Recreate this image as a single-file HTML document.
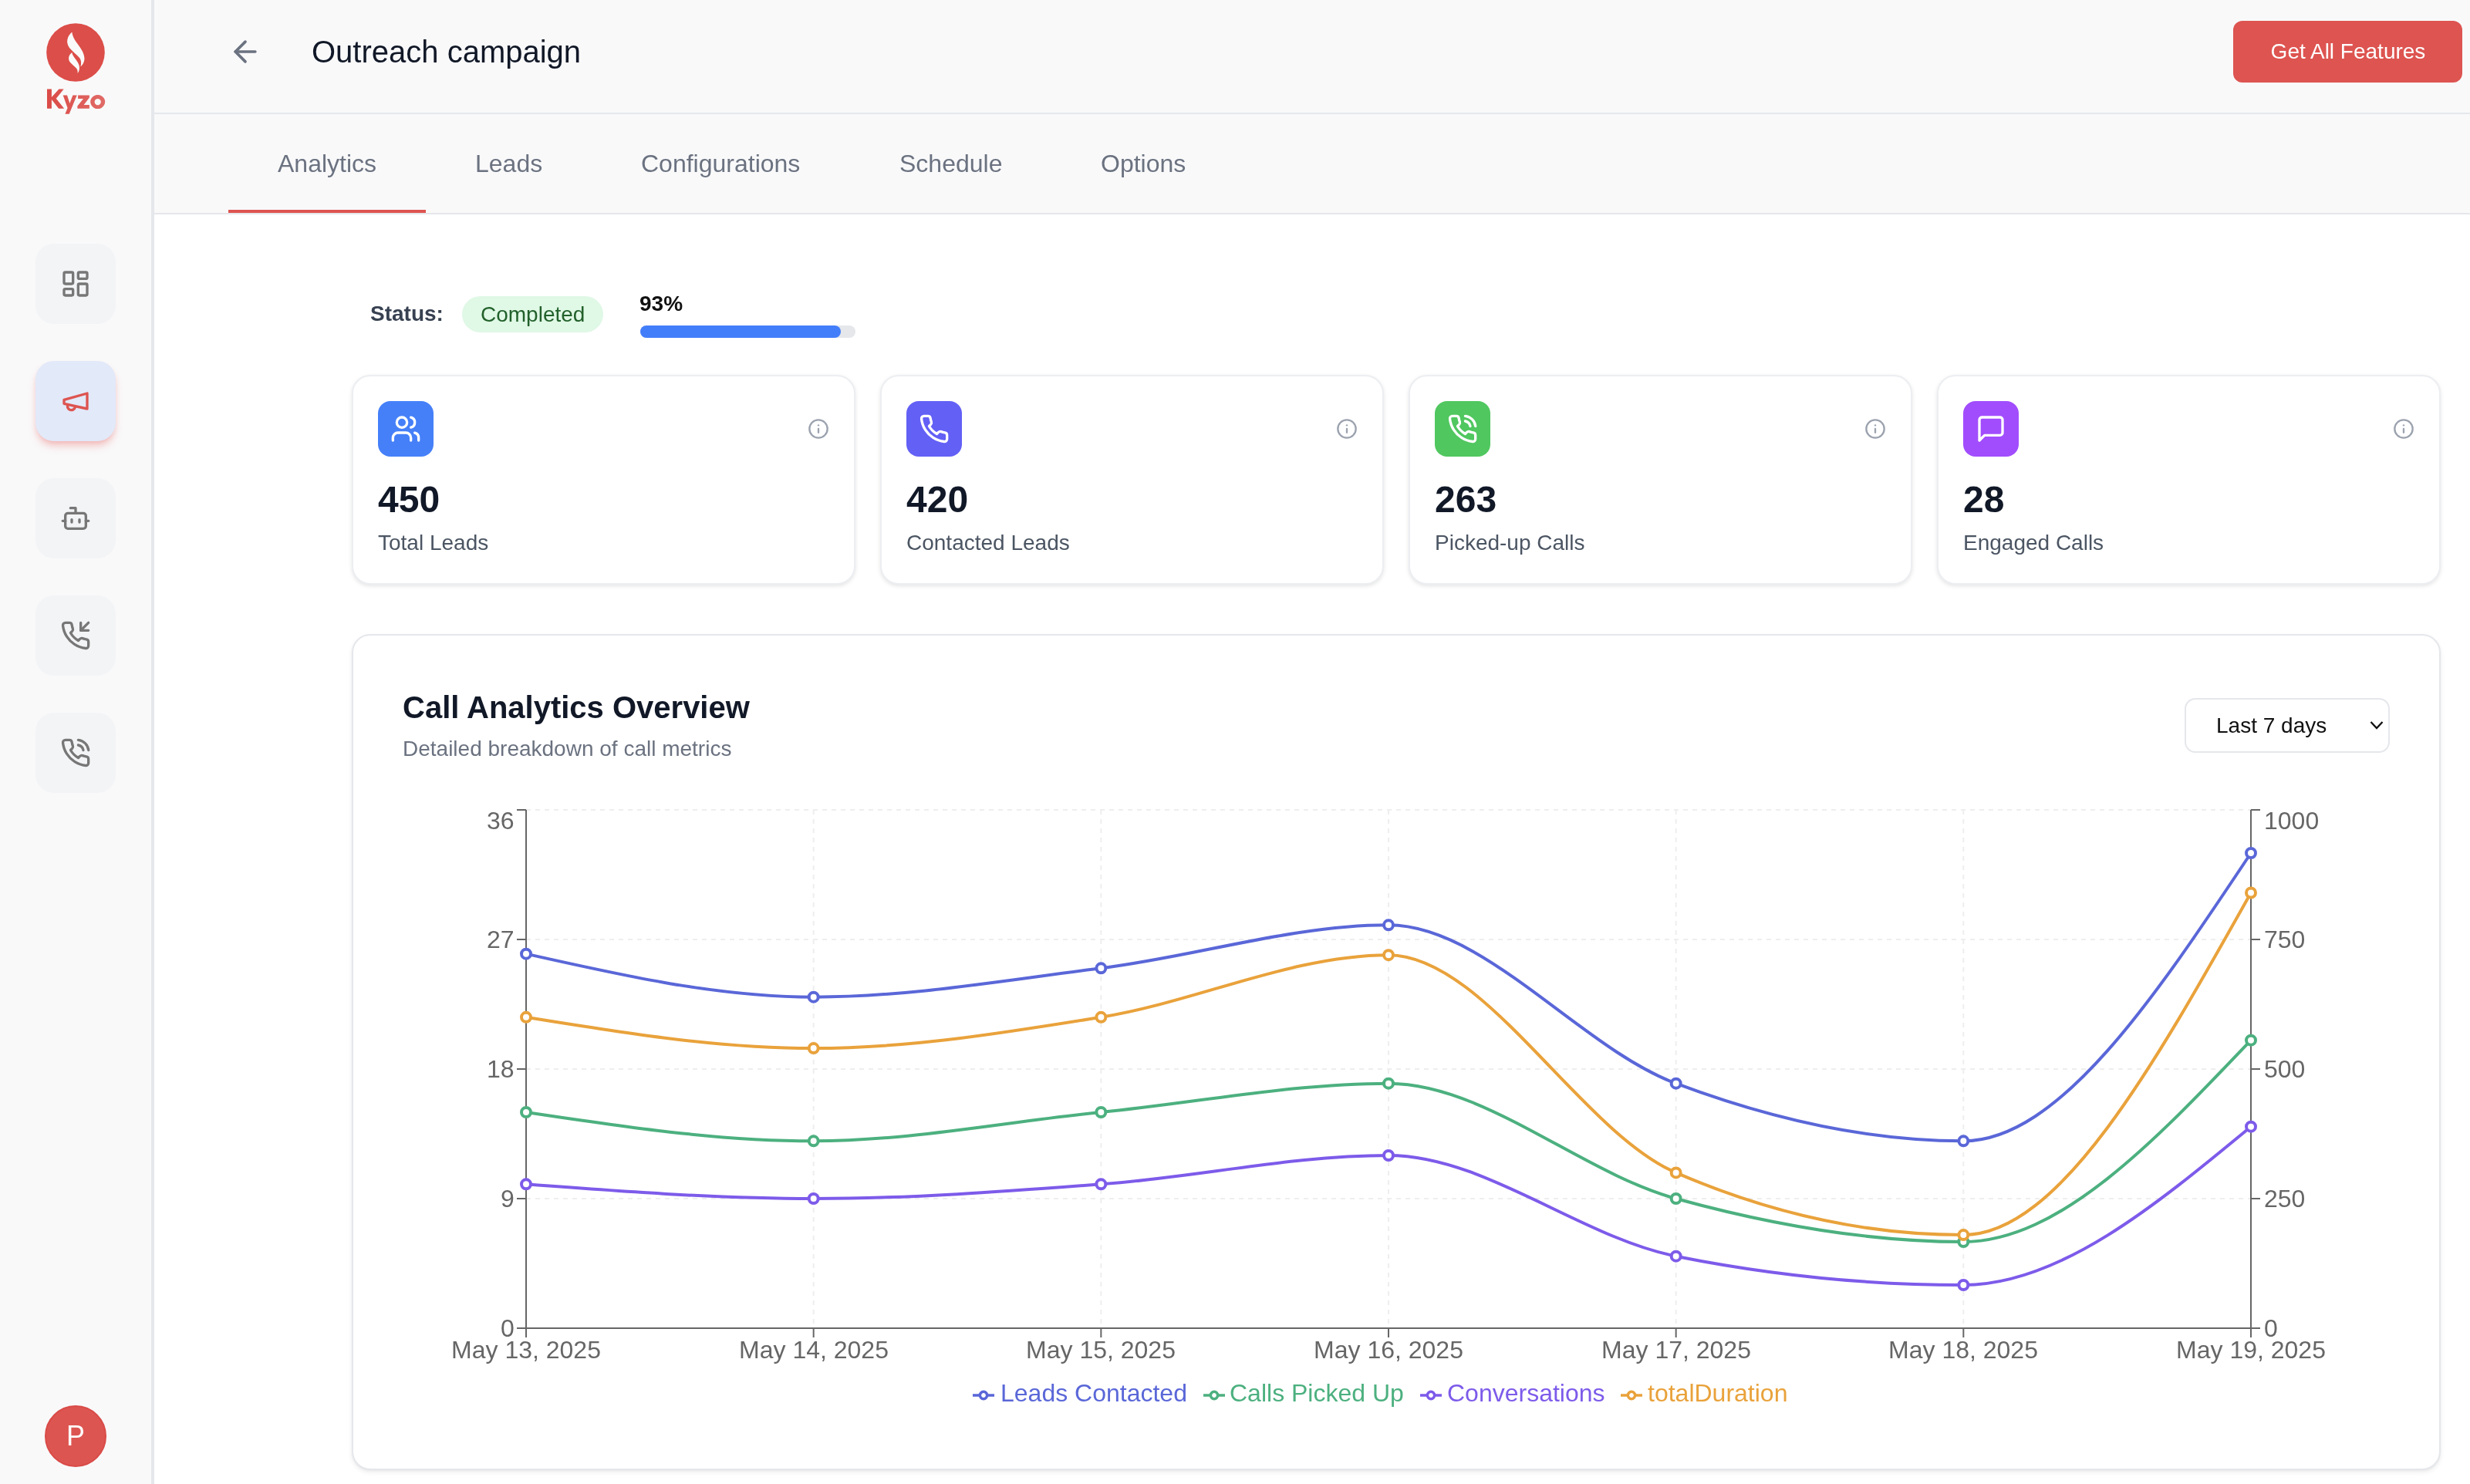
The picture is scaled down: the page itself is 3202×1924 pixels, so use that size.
<!DOCTYPE html>
<html><head><meta charset="utf-8"><title>Outreach campaign</title>
<style>
html,body{margin:0;padding:0;width:3202px;height:1924px;overflow:hidden;background:#ffffff;font-family:"Liberation Sans",sans-serif;}
.t{position:absolute;white-space:nowrap;will-change:transform;}
.abs{position:absolute;}
svg.ic{position:absolute;fill:none;stroke-linecap:round;stroke-linejoin:round;}
#sidebar{position:absolute;left:0;top:0;width:196px;height:1924px;background:#f9f9fa;border-right:4px solid #e5e7eb;}
#header{position:absolute;left:200px;top:0;width:3002px;height:146px;background:#f9f9fa;border-bottom:2px solid #e5e7eb;}
#tabs{position:absolute;left:200px;top:148px;width:3002px;height:128px;background:#f9f9fa;border-bottom:2px solid #e5e7eb;}
.nav{position:absolute;left:46px;width:104px;height:104px;border-radius:24px;background:#f3f4f6;}
.card{position:absolute;top:486px;width:649px;height:268px;border:2px solid #eceef1;border-radius:24px;background:#fff;box-shadow:0 2px 6px rgba(0,0,0,0.07),0 2px 4px rgba(0,0,0,0.04);}
.ibox{position:absolute;left:32px;top:32px;width:72px;height:72px;border-radius:16px;}
@media (max-width:2400px) and (min-resolution:1.5dppx){html{zoom:0.5;}}
</style></head>
<body>
<div id="sidebar">
  <svg class="abs" style="left:60px;top:30px" width="76" height="76" viewBox="0 0 76 76">
    <circle cx="38" cy="38" r="37.8" fill="#dc4e49"/>
    <path fill="#fafafa" d="M33.3 11.5C27 17 25 25 30 32C34 37 40 41 43.5 45.5C45.5 48.5 45.5 53 44.4 56.5C48 53.5 50 49 49.3 44C48.5 37 43.5 31 39.5 25.5C36 20.5 33.8 16.5 33.3 11.5Z"/>
    <path fill="#fafafa" d="M33.3 38C29.5 41 28 45 30 49.5C32 52.5 36 55.5 39 58.5C40.5 60.5 41 63 40.6 65.3C43 62 43.5 58.5 42.5 54.5C41 50 37.5 46.5 35 42.5C34 41 33.5 39.5 33.3 38Z"/>
  </svg>
  <svg class="abs" style="left:0;top:100px" width="196" height="60" viewBox="0 100 196 60">
    <defs><linearGradient id="kg" x1="61" x2="136" y1="0" y2="0" gradientUnits="userSpaceOnUse"><stop offset="0" stop-color="#db4b47"/><stop offset="1" stop-color="#e06b67"/></linearGradient></defs>
    <g fill="url(#kg)">
      <polygon points="61,115.5 66.9,115.5 66.9,126 76.4,115.5 82.7,115.5 72.8,127.7 83.2,140.8 76.1,140.8 66.9,129.1 66.9,140.8 61,140.8"/>
      <polygon points="81.7,123.5 87,123.5 90.4,133.9 94.4,123.5 99.7,123.5 89.7,147.8 84.4,147.8 87.6,140"/>
      <polygon points="101.1,123.5 115.9,123.5 115.9,126.4 108.7,136.1 115.9,136.1 115.9,140.8 100.4,140.8 100.4,137.6 108,128 101.1,128"/>
      <path fill-rule="evenodd" d="M126.7 123.1a9.5 9 0 1 0 0.01 0zM126.7 128a4.1 4.1 0 1 1 -0.01 0z"/>
    </g>
  </svg>
  <div class="nav" style="top:316px"></div>
  <svg class="ic" style="left:78px;top:348px" width="40" height="40" viewBox="0 0 24 24" stroke="#777777" stroke-width="2"><rect width="7" height="9" x="3" y="3" rx="1"/><rect width="7" height="5" x="14" y="3" rx="1"/><rect width="7" height="9" x="14" y="12" rx="1"/><rect width="7" height="5" x="3" y="16" rx="1"/></svg>
  <div class="nav" style="top:468px;background:#e2e9f9;box-shadow:0 8px 12px -2px rgba(235,80,76,0.28),0 4px 8px -4px rgba(235,80,76,0.3)"></div>
  <svg class="ic" style="left:78px;top:500px" width="40" height="40" viewBox="0 0 24 24" stroke="#dd5450" stroke-width="2"><path d="m3 11 18-5v12L3 14v-3z"/><path d="M11.6 16.8a3 3 0 1 1-5.8-1.6"/></svg>
  <div class="nav" style="top:620px"></div>
  <svg class="ic" style="left:78px;top:652px" width="40" height="40" viewBox="0 0 24 24" stroke="#777777" stroke-width="2"><path d="M12 8V4H8"/><rect width="16" height="12" x="4" y="8" rx="2"/><path d="M2 14h2"/><path d="M20 14h2"/><path d="M15 13v2"/><path d="M9 13v2"/></svg>
  <div class="nav" style="top:772px"></div>
  <svg class="ic" style="left:78px;top:804px" width="40" height="40" viewBox="0 0 24 24" stroke="#777777" stroke-width="2"><polyline points="16 2 16 8 22 8"/><line x1="22" x2="16" y1="2" y2="8"/><path d="M22 16.92v3a2 2 0 0 1-2.18 2 19.79 19.790 0 0 1-8.63-3.07 19.5 19.5 0 0 1-6-6 19.79 19.79 0 0 1-3.07-8.67A2 2 0 0 1 4.11 2h3a2 2 0 0 1 2 1.72 12.84 12.84 0 0 0 .7 2.81 2 2 0 0 1-.45 2.11L8.09 9.910a16 16 0 0 0 6 6l1.27-1.27a2 2 0 0 1 2.11-.45 12.84 12.84 0 0 0 2.81.7A2 2 0 0 1 22 16.92z"/></svg>
  <div class="nav" style="top:924px"></div>
  <svg class="ic" style="left:78px;top:956px" width="40" height="40" viewBox="0 0 24 24" stroke="#777777" stroke-width="2"><path d="M22 16.92v3a2 2 0 0 1-2.18 2 19.79 19.79 0 0 1-8.63-3.07 19.5 19.5 0 0 1-6-6 19.79 19.79 0 0 1-3.07-8.67A2 2 0 0 1 4.11 2h3a2 2 0 0 1 2 1.72 12.84 12.84 0 0 0 .7 2.81 2 2 0 0 1-.45 2.11L8.09 9.91a16 16 0 0 0 6 6l1.27-1.27a2 2 0 0 1 2.11-.45 12.84 12.84 0 0 0 2.81.7A2 2 0 0 1 22 16.92z"/><path d="M14.05 2a9 9 0 0 1 8 7.94"/><path d="M14.05 6A5 5 0 0 1 18 10"/></svg>
  <div class="abs" style="left:58px;top:1822px;width:76px;height:76px;border-radius:50%;background:#dd5551;border:2px solid #d94b47;"></div>
  <div class="t" style="left:-902.0px;width:2000px;text-align:center;top:1843.52px;font-size:36.0px;line-height:36.0px;color:#ffffff;font-weight:400;">P</div>

</div>

<div id="header"></div>
<svg class="ic" style="left:296px;top:45px" width="44" height="44" viewBox="0 0 24 24" stroke="#6b7280" stroke-width="2"><path d="m12 19-7-7 7-7"/><path d="M19 12H5"/></svg>
<div class="t" style="left:404.0px;top:46.83px;font-size:40.0px;line-height:40.0px;color:#111827;font-weight:400;">Outreach campaign</div>

<div class="abs" style="left:2895px;top:27px;width:297px;height:80px;border-radius:12px;background:#dd5450;"></div>
<div class="t" style="left:2043.5px;width:2000px;text-align:center;top:53.19px;font-size:28.0px;line-height:28.0px;color:#ffffff;font-weight:400;">Get All Features</div>


<div id="tabs"></div>
<div class="t" style="left:360.0px;top:196.41px;font-size:32.0px;line-height:32.0px;color:#6b7280;font-weight:400;">Analytics</div>

<div class="t" style="left:615.5px;top:196.41px;font-size:32.0px;line-height:32.0px;color:#6b7280;font-weight:400;">Leads</div>

<div class="t" style="left:831.0px;top:196.41px;font-size:32.0px;line-height:32.0px;color:#6b7280;font-weight:400;">Configurations</div>

<div class="t" style="left:1166.0px;top:196.41px;font-size:32.0px;line-height:32.0px;color:#6b7280;font-weight:400;">Schedule</div>

<div class="t" style="left:1427.0px;top:196.41px;font-size:32.0px;line-height:32.0px;color:#6b7280;font-weight:400;">Options</div>

<div class="abs" style="left:296px;top:272px;width:256px;height:4px;background:#dd5450;"></div>

<div class="t" style="left:479.6px;top:393.29px;font-size:28.0px;line-height:28.0px;color:#374151;font-weight:700;">Status:</div>

<div class="abs" style="left:599px;top:384px;width:183px;height:47px;border-radius:24px;background:#e0f8e6;"></div>
<div class="t" style="left:623.0px;top:394.29px;font-size:28.0px;line-height:28.0px;color:#22612b;font-weight:400;">Completed</div>

<div class="t" style="left:829.3px;top:379.79px;font-size:28.0px;line-height:28.0px;color:#111111;font-weight:700;">93%</div>

<div class="abs" style="left:830px;top:422px;width:279px;height:16px;border-radius:8px;background:#e5e7eb;"></div>
<div class="abs" style="left:830px;top:422px;width:260px;height:16px;border-radius:8px;background:#437efa;"></div>

<div class="card" style="left:456px">
  <div class="ibox" style="background:#4580f9"></div>
  <svg class="ic" style="left:48px;top:48px" width="40" height="40" viewBox="0 0 24 24" stroke="#fff" stroke-width="2"><path d="M16 21v-2a4 4 0 0 0-4-4H6a4 4 0 0 0-4 4v2"/><circle cx="9" cy="7" r="4"/><path d="M22 21v-2a4 4 0 0 0-3-3.87"/><path d="M16 3.13a4 4 0 0 1 0 7.75"/></svg>
  <svg class="ic" style="left:589px;top:54px" width="28" height="28" viewBox="0 0 24 24" stroke="#9ca3af" stroke-width="2"><circle cx="12" cy="12" r="10"/><path d="M12 16v-4"/><path d="M12 8h.01"/></svg>
</div>
<div class="card" style="left:1141px">
  <div class="ibox" style="background:#6360f6"></div>
  <svg class="ic" style="left:48px;top:48px" width="40" height="40" viewBox="0 0 24 24" stroke="#fff" stroke-width="2"><path d="M22 16.92v3a2 2 0 0 1-2.18 2 19.79 19.79 0 0 1-8.63-3.07 19.5 19.5 0 0 1-6-6 19.79 19.79 0 0 1-3.070-8.67A2 2 0 0 1 4.11 2h3a2 2 0 0 1 2 1.72 12.84 12.84 0 0 0 .7 2.81 2 2 0 0 1-.45 2.11L8.09 9.91a16 16 0 0 0 6 6l1.27-1.27a2 2 0 0 1 2.11-.45 12.84 12.84 0 0 0 2.81.7A2 2 0 0 1 22 16.92z"/></svg>
  <svg class="ic" style="left:589px;top:54px" width="28" height="28" viewBox="0 0 24 24" stroke="#9ca3af" stroke-width="2"><circle cx="12" cy="12" r="10"/><path d="M12 16v-4"/><path d="M12 8h.01"/></svg>
</div>
<div class="card" style="left:1826px">
  <div class="ibox" style="background:#50c75f"></div>
  <svg class="ic" style="left:48px;top:48px" width="40" height="40" viewBox="0 0 24 24" stroke="#fff" stroke-width="2"><path d="M22 16.92v3a2 2 0 0 1-2.18 2 19.79 19.79 0 0 1-8.63-3.07 19.5 19.5 0 0 1-6-6 19.79 19.79 0 0 1-3.07-8.67A2 2 0 0 1 4.11 2h3a2 2 0 0 1 2 1.72 12.84 12.84 0 0 0 .7 2.81 2 2 0 0 1-.45 2.11L8.09 9.91a16 16 0 0 0 6 6l1.27-1.27a2 2 0 0 1 2.11-.45 12.84 12.84 0 0 0 2.81.7A2 2 0 0 1 22 16.92z"/><path d="M14.05 2a9 9 0 0 1 8 7.94"/><path d="M14.05 6A5 5 0 0 1 18 10"/></svg>
  <svg class="ic" style="left:589px;top:54px" width="28" height="28" viewBox="0 0 24 24" stroke="#9ca3af" stroke-width="2"><circle cx="12" cy="12" r="10"/><path d="M12 16v-4"/><path d="M12 8h.01"/></svg>
</div>
<div class="card" style="left:2511px">
  <div class="ibox" style="background:#a14dfd"></div>
  <svg class="ic" style="left:48px;top:48px" width="40" height="40" viewBox="0 0 24 24" stroke="#fff" stroke-width="2"><path d="M21 15a2 2 0 0 1-2 2H7l-4 4V5a2 2 0 0 1 2-2h14a2 2 0 0 1 2 2z"/></svg>
  <svg class="ic" style="left:589px;top:54px" width="28" height="28" viewBox="0 0 24 24" stroke="#9ca3af" stroke-width="2"><circle cx="12" cy="12" r="10"/><path d="M12 16v-4"/><path d="M12 8h.01"/></svg>
</div>
<div class="t" style="left:490.0px;top:624.36px;font-size:48.0px;line-height:48.0px;color:#111827;font-weight:700;">450</div>

<div class="t" style="left:490.0px;top:689.99px;font-size:28.0px;line-height:28.0px;color:#4b5563;font-weight:400;">Total Leads</div>

<div class="t" style="left:1175.0px;top:624.36px;font-size:48.0px;line-height:48.0px;color:#111827;font-weight:700;">420</div>

<div class="t" style="left:1175.0px;top:689.99px;font-size:28.0px;line-height:28.0px;color:#4b5563;font-weight:400;">Contacted Leads</div>

<div class="t" style="left:1860.0px;top:624.36px;font-size:48.0px;line-height:48.0px;color:#111827;font-weight:700;">263</div>

<div class="t" style="left:1860.0px;top:689.99px;font-size:28.0px;line-height:28.0px;color:#4b5563;font-weight:400;">Picked-up Calls</div>

<div class="t" style="left:2545.0px;top:624.36px;font-size:48.0px;line-height:48.0px;color:#111827;font-weight:700;">28</div>

<div class="t" style="left:2545.0px;top:689.99px;font-size:28.0px;line-height:28.0px;color:#4b5563;font-weight:400;">Engaged Calls</div>


<div class="abs" style="left:456px;top:822px;width:2704px;height:1080px;border:2px solid #e5e7eb;border-radius:24px;background:#fff;box-shadow:0 3px 6px rgba(0,0,0,0.07),0 1px 3px rgba(0,0,0,0.05);"></div>
<div class="t" style="left:522.0px;top:896.83px;font-size:40.0px;line-height:40.0px;color:#111827;font-weight:700;">Call Analytics Overview</div>

<div class="t" style="left:521.5px;top:957.29px;font-size:28.0px;line-height:28.0px;color:#6b7280;font-weight:400;">Detailed breakdown of call metrics</div>

<div class="abs" style="left:2832px;top:905px;width:262px;height:67px;border:2px solid #e5e7eb;border-radius:14px;background:#fff;"></div>
<div class="t" style="left:2872.5px;top:926.59px;font-size:28.0px;line-height:28.0px;color:#111111;font-weight:400;">Last 7 days</div>

<svg class="abs" style="left:3070px;top:932px" width="22" height="16" viewBox="0 0 22 16"><path d="M3.5 4L11 12L18.5 4" fill="none" stroke="#111" stroke-width="2.3"/></svg>

<svg class="chart" width="3202" height="1924" viewBox="0 0 3202 1924" style="position:absolute;left:0;top:0">
<line x1="682" y1="1722.0" x2="2918" y2="1722.0" stroke="#eeeeee" stroke-width="2" stroke-dasharray="6 6"/>
<line x1="682" y1="1554.0" x2="2918" y2="1554.0" stroke="#eeeeee" stroke-width="2" stroke-dasharray="6 6"/>
<line x1="682" y1="1386.0" x2="2918" y2="1386.0" stroke="#eeeeee" stroke-width="2" stroke-dasharray="6 6"/>
<line x1="682" y1="1218.0" x2="2918" y2="1218.0" stroke="#eeeeee" stroke-width="2" stroke-dasharray="6 6"/>
<line x1="682" y1="1050.0" x2="2918" y2="1050.0" stroke="#eeeeee" stroke-width="2" stroke-dasharray="6 6"/>
<line x1="682.00" y1="1050" x2="682.00" y2="1722" stroke="#eeeeee" stroke-width="2" stroke-dasharray="6 6"/>
<line x1="1054.67" y1="1050" x2="1054.67" y2="1722" stroke="#eeeeee" stroke-width="2" stroke-dasharray="6 6"/>
<line x1="1427.33" y1="1050" x2="1427.33" y2="1722" stroke="#eeeeee" stroke-width="2" stroke-dasharray="6 6"/>
<line x1="1800.00" y1="1050" x2="1800.00" y2="1722" stroke="#eeeeee" stroke-width="2" stroke-dasharray="6 6"/>
<line x1="2172.67" y1="1050" x2="2172.67" y2="1722" stroke="#eeeeee" stroke-width="2" stroke-dasharray="6 6"/>
<line x1="2545.33" y1="1050" x2="2545.33" y2="1722" stroke="#eeeeee" stroke-width="2" stroke-dasharray="6 6"/>
<line x1="2918.00" y1="1050" x2="2918.00" y2="1722" stroke="#eeeeee" stroke-width="2" stroke-dasharray="6 6"/>
<line x1="682" y1="1050" x2="682" y2="1722" stroke="#666" stroke-width="2"/>
<line x1="2918" y1="1050" x2="2918" y2="1722" stroke="#666" stroke-width="2"/>
<line x1="682" y1="1722" x2="2918" y2="1722" stroke="#666" stroke-width="2"/>
<line x1="670" y1="1722.0" x2="682" y2="1722.0" stroke="#666" stroke-width="2"/>
<line x1="2918" y1="1722.0" x2="2930" y2="1722.0" stroke="#666" stroke-width="2"/>
<line x1="670" y1="1554.0" x2="682" y2="1554.0" stroke="#666" stroke-width="2"/>
<line x1="2918" y1="1554.0" x2="2930" y2="1554.0" stroke="#666" stroke-width="2"/>
<line x1="670" y1="1386.0" x2="682" y2="1386.0" stroke="#666" stroke-width="2"/>
<line x1="2918" y1="1386.0" x2="2930" y2="1386.0" stroke="#666" stroke-width="2"/>
<line x1="670" y1="1218.0" x2="682" y2="1218.0" stroke="#666" stroke-width="2"/>
<line x1="2918" y1="1218.0" x2="2930" y2="1218.0" stroke="#666" stroke-width="2"/>
<line x1="670" y1="1050.0" x2="682" y2="1050.0" stroke="#666" stroke-width="2"/>
<line x1="2918" y1="1050.0" x2="2930" y2="1050.0" stroke="#666" stroke-width="2"/>
<line x1="682.00" y1="1722" x2="682.00" y2="1734" stroke="#666" stroke-width="2"/>
<line x1="1054.67" y1="1722" x2="1054.67" y2="1734" stroke="#666" stroke-width="2"/>
<line x1="1427.33" y1="1722" x2="1427.33" y2="1734" stroke="#666" stroke-width="2"/>
<line x1="1800.00" y1="1722" x2="1800.00" y2="1734" stroke="#666" stroke-width="2"/>
<line x1="2172.67" y1="1722" x2="2172.67" y2="1734" stroke="#666" stroke-width="2"/>
<line x1="2545.33" y1="1722" x2="2545.33" y2="1734" stroke="#666" stroke-width="2"/>
<line x1="2918.00" y1="1722" x2="2918.00" y2="1734" stroke="#666" stroke-width="2"/>
<path d="M682.00,1236.67C806.22,1264.67,930.44,1292.67,1054.67,1292.67C1178.89,1292.67,1303.11,1270.89,1427.33,1255.33C1551.56,1239.78,1675.78,1199.33,1800.00,1199.33C1924.22,1199.33,2048.44,1358.00,2172.67,1404.67C2296.89,1451.33,2421.11,1479.33,2545.33,1479.33C2669.56,1479.33,2793.78,1292.67,2918.00,1106.00" fill="none" stroke="#5a67d8" stroke-width="4"/>
<path d="M682.00,1442.00C806.22,1460.67,930.44,1479.33,1054.67,1479.33C1178.89,1479.33,1303.11,1454.44,1427.33,1442.00C1551.56,1429.56,1675.78,1404.67,1800.00,1404.67C1924.22,1404.67,2048.44,1519.78,2172.67,1554.00C2296.89,1588.22,2421.11,1610.00,2545.33,1610.00C2669.56,1610.00,2793.78,1479.33,2918.00,1348.67" fill="none" stroke="#4cb07f" stroke-width="4"/>
<path d="M682.00,1535.33C806.22,1544.67,930.44,1554.00,1054.67,1554.00C1178.89,1554.00,1303.11,1544.67,1427.33,1535.33C1551.56,1526.00,1675.78,1498.00,1800.00,1498.00C1924.22,1498.00,2048.44,1603.78,2172.67,1628.67C2296.89,1653.56,2421.11,1666.00,2545.33,1666.00C2669.56,1666.00,2793.78,1563.33,2918.00,1460.67" fill="none" stroke="#7d5bea" stroke-width="4"/>
<path d="M682.00,1318.80C806.22,1338.96,930.44,1359.12,1054.67,1359.12C1178.89,1359.12,1303.11,1338.96,1427.33,1318.80C1551.56,1298.64,1675.78,1238.16,1800.00,1238.16C1924.22,1238.16,2048.44,1466.64,2172.67,1520.40C2296.89,1574.16,2421.11,1601.04,2545.33,1601.04C2669.56,1601.04,2793.78,1379.28,2918.00,1157.52" fill="none" stroke="#e9a23b" stroke-width="4"/>
<circle cx="682.00" cy="1236.67" r="6" fill="#fff" stroke="#5a67d8" stroke-width="4"/>
<circle cx="1054.67" cy="1292.67" r="6" fill="#fff" stroke="#5a67d8" stroke-width="4"/>
<circle cx="1427.33" cy="1255.33" r="6" fill="#fff" stroke="#5a67d8" stroke-width="4"/>
<circle cx="1800.00" cy="1199.33" r="6" fill="#fff" stroke="#5a67d8" stroke-width="4"/>
<circle cx="2172.67" cy="1404.67" r="6" fill="#fff" stroke="#5a67d8" stroke-width="4"/>
<circle cx="2545.33" cy="1479.33" r="6" fill="#fff" stroke="#5a67d8" stroke-width="4"/>
<circle cx="2918.00" cy="1106.00" r="6" fill="#fff" stroke="#5a67d8" stroke-width="4"/>
<circle cx="682.00" cy="1442.00" r="6" fill="#fff" stroke="#4cb07f" stroke-width="4"/>
<circle cx="1054.67" cy="1479.33" r="6" fill="#fff" stroke="#4cb07f" stroke-width="4"/>
<circle cx="1427.33" cy="1442.00" r="6" fill="#fff" stroke="#4cb07f" stroke-width="4"/>
<circle cx="1800.00" cy="1404.67" r="6" fill="#fff" stroke="#4cb07f" stroke-width="4"/>
<circle cx="2172.67" cy="1554.00" r="6" fill="#fff" stroke="#4cb07f" stroke-width="4"/>
<circle cx="2545.33" cy="1610.00" r="6" fill="#fff" stroke="#4cb07f" stroke-width="4"/>
<circle cx="2918.00" cy="1348.67" r="6" fill="#fff" stroke="#4cb07f" stroke-width="4"/>
<circle cx="682.00" cy="1535.33" r="6" fill="#fff" stroke="#7d5bea" stroke-width="4"/>
<circle cx="1054.67" cy="1554.00" r="6" fill="#fff" stroke="#7d5bea" stroke-width="4"/>
<circle cx="1427.33" cy="1535.33" r="6" fill="#fff" stroke="#7d5bea" stroke-width="4"/>
<circle cx="1800.00" cy="1498.00" r="6" fill="#fff" stroke="#7d5bea" stroke-width="4"/>
<circle cx="2172.67" cy="1628.67" r="6" fill="#fff" stroke="#7d5bea" stroke-width="4"/>
<circle cx="2545.33" cy="1666.00" r="6" fill="#fff" stroke="#7d5bea" stroke-width="4"/>
<circle cx="2918.00" cy="1460.67" r="6" fill="#fff" stroke="#7d5bea" stroke-width="4"/>
<circle cx="682.00" cy="1318.80" r="6" fill="#fff" stroke="#e9a23b" stroke-width="4"/>
<circle cx="1054.67" cy="1359.12" r="6" fill="#fff" stroke="#e9a23b" stroke-width="4"/>
<circle cx="1427.33" cy="1318.80" r="6" fill="#fff" stroke="#e9a23b" stroke-width="4"/>
<circle cx="1800.00" cy="1238.16" r="6" fill="#fff" stroke="#e9a23b" stroke-width="4"/>
<circle cx="2172.67" cy="1520.40" r="6" fill="#fff" stroke="#e9a23b" stroke-width="4"/>
<circle cx="2545.33" cy="1601.04" r="6" fill="#fff" stroke="#e9a23b" stroke-width="4"/>
<circle cx="2918.00" cy="1157.52" r="6" fill="#fff" stroke="#e9a23b" stroke-width="4"/>
</svg>
<div class="t" style="right:2535.5px;top:1706.31px;font-size:32px;line-height:32px;color:#666;font-weight:400;">0</div>
<div class="t" style="right:2535.5px;top:1538.31px;font-size:32px;line-height:32px;color:#666;font-weight:400;">9</div>
<div class="t" style="right:2535.5px;top:1370.31px;font-size:32px;line-height:32px;color:#666;font-weight:400;">18</div>
<div class="t" style="right:2535.5px;top:1202.31px;font-size:32px;line-height:32px;color:#666;font-weight:400;">27</div>
<div class="t" style="right:2535.5px;top:1047.91px;font-size:32px;line-height:32px;color:#666;font-weight:400;">36</div>
<div class="t" style="left:2934.5px;top:1706.31px;font-size:32px;line-height:32px;color:#666;font-weight:400;">0</div>
<div class="t" style="left:2934.5px;top:1538.31px;font-size:32px;line-height:32px;color:#666;font-weight:400;">250</div>
<div class="t" style="left:2934.5px;top:1370.31px;font-size:32px;line-height:32px;color:#666;font-weight:400;">500</div>
<div class="t" style="left:2934.5px;top:1202.31px;font-size:32px;line-height:32px;color:#666;font-weight:400;">750</div>
<div class="t" style="left:2934.5px;top:1047.91px;font-size:32px;line-height:32px;color:#666;font-weight:400;">1000</div>
<div class="t" style="left:-318.0px;width:2000px;text-align:center;top:1733.91px;font-size:32px;line-height:32px;color:#666;font-weight:400;">May 13, 2025</div>
<div class="t" style="left:54.66666666666674px;width:2000px;text-align:center;top:1733.91px;font-size:32px;line-height:32px;color:#666;font-weight:400;">May 14, 2025</div>
<div class="t" style="left:427.3333333333335px;width:2000px;text-align:center;top:1733.91px;font-size:32px;line-height:32px;color:#666;font-weight:400;">May 15, 2025</div>
<div class="t" style="left:800.0px;width:2000px;text-align:center;top:1733.91px;font-size:32px;line-height:32px;color:#666;font-weight:400;">May 16, 2025</div>
<div class="t" style="left:1172.666666666667px;width:2000px;text-align:center;top:1733.91px;font-size:32px;line-height:32px;color:#666;font-weight:400;">May 17, 2025</div>
<div class="t" style="left:1545.333333333333px;width:2000px;text-align:center;top:1733.91px;font-size:32px;line-height:32px;color:#666;font-weight:400;">May 18, 2025</div>
<div class="t" style="left:1918.0px;width:2000px;text-align:center;top:1733.91px;font-size:32px;line-height:32px;color:#666;font-weight:400;">May 19, 2025</div>


<svg class="abs" style="left:1261px;top:1795px" width="28" height="28" viewBox="0 0 32 32"><path stroke-width="4" fill="none" stroke="#5a67d8" d="M0,16h10.67A5.33,5.33,0,1,1,21.33,16H32M21.33,16A5.33,5.33,0,1,1,10.67,16"/></svg>
<div class="t" style="left:1296.6px;top:1790.11px;font-size:32.0px;line-height:32.0px;color:#5a67d8;font-weight:400;">Leads Contacted</div>

<svg class="abs" style="left:1560px;top:1795px" width="28" height="28" viewBox="0 0 32 32"><path stroke-width="4" fill="none" stroke="#4cb07f" d="M0,16h10.67A5.33,5.33,0,1,1,21.33,16H32M21.33,16A5.33,5.33,0,1,1,10.67,16"/></svg>
<div class="t" style="left:1594.0px;top:1790.11px;font-size:32.0px;line-height:32.0px;color:#4cb07f;font-weight:400;">Calls Picked Up</div>

<svg class="abs" style="left:1841px;top:1795px" width="28" height="28" viewBox="0 0 32 32"><path stroke-width="4" fill="none" stroke="#7d5bea" d="M0,16h10.67A5.33,5.33,0,1,1,21.33,16H32M21.33,16A5.33,5.33,0,1,1,10.67,16"/></svg>
<div class="t" style="left:1876.0px;top:1790.11px;font-size:32.0px;line-height:32.0px;color:#7d5bea;font-weight:400;">Conversations</div>

<svg class="abs" style="left:2101px;top:1795px" width="28" height="28" viewBox="0 0 32 32"><path stroke-width="4" fill="none" stroke="#e9a23b" d="M0,16h10.67A5.33,5.33,0,1,1,21.33,16H32M21.33,16A5.33,5.33,0,1,1,10.67,16"/></svg>
<div class="t" style="left:2136.2px;top:1790.11px;font-size:32.0px;line-height:32.0px;color:#e9a23b;font-weight:400;">totalDuration</div>

</body></html>
